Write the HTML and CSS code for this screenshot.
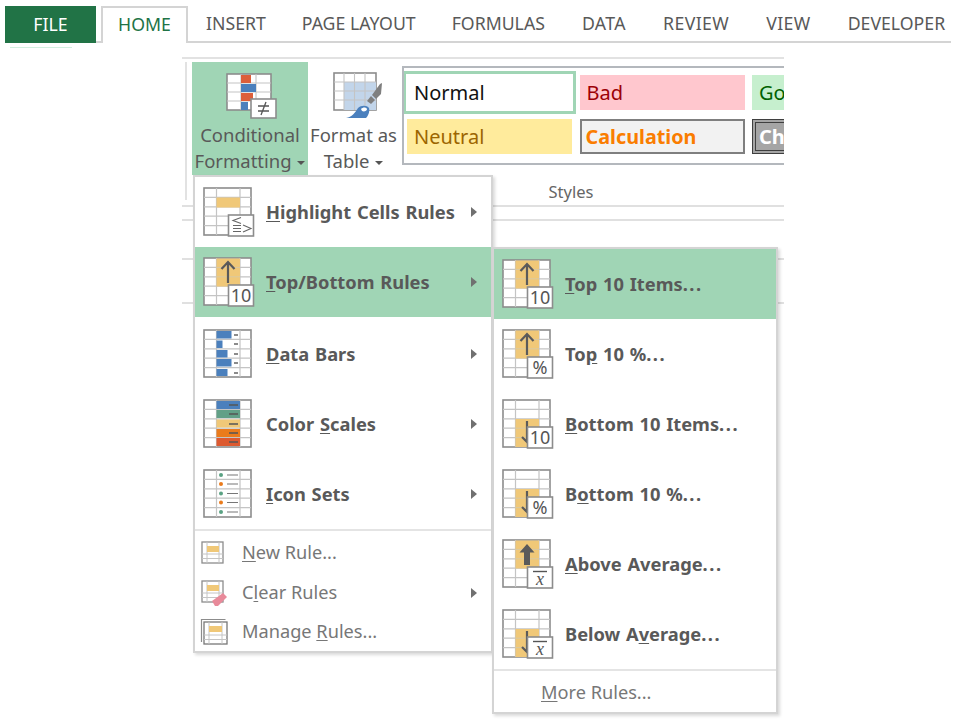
FILE: index.html
```html
<!DOCTYPE html>
<html lang="en">
<head>
<meta charset="utf-8">
<title>Conditional Formatting</title>
<link rel="stylesheet" href="styles.css">
</head>
<body>
<svg class="defs" width="0" height="0" aria-hidden="true">
  <defs>
    <symbol id="grid" viewBox="0 0 52 50">
      <rect x="1" y="1" width="47" height="47" fill="#fff" stroke="#8c8c8c" stroke-width="1.6"/>
      <path d="M13.5 1v47M37 1v47M1 10.4h47M1 19.8h47M1 29.2h47M1 38.6h47" stroke="#c4c4c4" stroke-width="1.2" fill="none"/>
    </symbol>
    <symbol id="badge10" viewBox="0 0 52 50">
      <rect x="25.5" y="28" width="25" height="21" fill="#fff" stroke="#8c8c8c" stroke-width="1.6"/>
      <text x="38" y="45" class="ic-t" text-anchor="middle">10</text>
    </symbol>
    <symbol id="badgepct" viewBox="0 0 52 50">
      <rect x="25.5" y="28" width="25" height="21" fill="#fff" stroke="#8c8c8c" stroke-width="1.6"/>
      <text x="38" y="45" class="ic-t" text-anchor="middle">%</text>
    </symbol>
    <symbol id="badgex" viewBox="0 0 52 50">
      <rect x="25.5" y="28" width="25" height="21" fill="#fff" stroke="#8c8c8c" stroke-width="1.6"/>
      <path d="M31 32.5h14" stroke="#555" stroke-width="1.4"/>
      <text x="38" y="46" class="ic-x" text-anchor="middle">x</text>
    </symbol>
    <symbol id="up" viewBox="0 0 52 50">
      <rect x="13.5" y="1.5" width="23.5" height="28" fill="#f0c878"/>
      <path d="M13.5 10.4h23.5M13.5 19.8h23.5" stroke="#d9c9a0" stroke-width="1"/>
      <path d="M25 26V5M18.5 12 25 5l6.5 7" fill="none" stroke="#5a5a5a" stroke-width="2.2"/>
    </symbol>
    <symbol id="upbold" viewBox="0 0 52 50">
      <rect x="13.5" y="1.5" width="23.5" height="28" fill="#f0c878"/>
      <path d="M13.5 10.4h23.5M13.5 19.8h23.5" stroke="#d9c9a0" stroke-width="1"/>
      <path d="M25 5l7.5 8.5H28V26h-6V13.500h-4.500z" fill="#5a5a5a"/>
    </symbol>
    <symbol id="down" viewBox="0 0 52 50">
      <rect x="13.5" y="20" width="23.5" height="28" fill="#f0c878"/>
      <path d="M13.5 29.2h23.5M13.5 38.6h23.5" stroke="#d9c9a0" stroke-width="1"/>
      <path d="M25 22v21M20 38l5 5 3-3" fill="none" stroke="#5a5a5a" stroke-width="2.2"/>
    </symbol>
  </defs>
</svg>

<nav class="tabs">
  <span class="tab file">FILE</span>
  <span class="tab home">HOME</span>
  <span class="tab">INSERT</span>
  <span class="tab">PAGE LAYOUT</span>
  <span class="tab">FORMULAS</span>
  <span class="tab wide-tab">DATA</span>
  <span class="tab wide-tab">REVIEW</span>
  <span class="tab wide-tab">VIEW</span>
  <span class="tab">DEVELOPER</span>
</nav>
<div class="file-accent"></div>

<section class="ribbon">
  <div class="ribbon-main">
    <div class="vline"></div>
    <div class="rbtn active">
      <svg class="rbtn-icon cf-icon" width="52" height="50" viewBox="0 0 52 50">
        <rect x="1" y="1" width="44" height="36" fill="#fff" stroke="#8c8c8c" stroke-width="1.6"/>
        <path d="M15 1v36M30 1v36M1 10h44M1 19h44M1 28h44" stroke="#c4c4c4" stroke-width="1.1"/>
        <rect x="15" y="2" width="10" height="8" fill="#dd5f3a"/>
        <rect x="15" y="11" width="15" height="8" fill="#4b80bd"/>
        <rect x="15" y="20" width="12" height="8" fill="#dd5f3a"/>
        <rect x="15" y="29" width="7" height="8" fill="#4b80bd"/>
        <rect x="25" y="26" width="25" height="19" fill="#fff" stroke="#8c8c8c" stroke-width="1.6"/>
        <path d="M32 33h11M32 38h11M40 29l-5 13" stroke="#555" stroke-width="1.3" fill="none"/>
      </svg>
      <span class="rbtn-label">Conditional<br>Formatting <i class="caret"></i></span>
    </div>
    <div class="rbtn fmt">
      <svg class="rbtn-icon fmt-icon" width="52" height="50" viewBox="0 0 52 50">
        <rect x="1" y="1" width="42" height="37" fill="#fff" stroke="#8c8c8c" stroke-width="1.6"/>
        <rect x="11" y="10" width="32" height="28" fill="#c2d5ea"/>
        <path d="M11 1v37M21.500 1v37M32 1v37M1 10h42M1 19h42M1 28h42" stroke="#c4c4c4" stroke-width="1.1"/>
        <path d="M39 23 47 12l2-1-1 11-5 5z" fill="#7f7f7f"/>
        <path d="M34 29l4-5 4 4-4 4z" fill="#7f7f7f"/>
        <path d="M13 46c6-1 9-5 12-10 3-3 9-3 11 0 1 4-1 8-3 10z" fill="#4b80bd"/>
        <path d="M28 37c2-2 5-2 6 0 0 2-3 3-5 2z" fill="#fff"/>
      </svg>
      <span class="rbtn-label">Format as<br>Table <i class="caret"></i></span>
    </div>
    <div class="styles">
      <div class="gallery">
        <div class="cell normal">Normal</div>
        <div class="cell bad">Bad</div>
        <div class="cell good">Good</div>
        <div class="cell neutral">Neutral</div>
        <div class="cell calc">Calculation</div>
        <div class="cell check">Check Cell</div>
      </div>
      <div class="group-label">Styles</div>
    </div>
  </div>
  <div class="rule r1"></div>
  <div class="rule r2"></div>
  <div class="rule r3"></div>
  <div class="rule r4"></div>
</section>

<div class="menu main-menu">
  <div class="mi">
    <svg class="ico" width="52" height="50"><use href="#grid"/><rect x="13.500" y="10.500" width="23.500" height="10" fill="#f0c878"/><rect x="25.500" y="28" width="25" height="21" fill="#fff" stroke="#8c8c8c" stroke-width="1.6"/><path d="M38 30.500l-8 3 8 3M30 38.500h8M30 41.500h8M30 44.500h8M40 38l8 3.500-8 3.500" fill="none" stroke="#666" stroke-width="1.1"/></svg>
    <span class="lbl"><u>H</u>ighlight Cells Rules</span><i class="arrow"></i>
  </div>
  <div class="mi sel">
    <svg class="ico" width="52" height="50"><use href="#grid"/><use href="#up"/><use href="#badge10"/></svg>
    <span class="lbl"><u>T</u>op/Bottom Rules</span><i class="arrow"></i>
  </div>
  <div class="mi after-sel">
    <svg class="ico" width="52" height="50"><use href="#grid"/>
      <path d="M13.500 2h15v7.500h-15zM13.500 11.500h6v7.500h-6zM13.500 21h11v7.500h-11zM13.500 30h15v7.500h-15zM13.500 40h11v7h-11z" fill="#4b80bd"/>
      <path d="M31 6h4M31 15h4M31 25h4M31 34h4M31 44h4" stroke="#666" stroke-width="1.400"/></svg>
    <span class="lbl"><u>D</u>ata Bars</span><i class="arrow"></i>
  </div>
  <div class="mi">
    <svg class="ico" width="52" height="50"><use href="#grid"/>
      <rect x="13.500" y="2" width="23.500" height="8" fill="#4b80bd"/><rect x="13.500" y="11" width="23.500" height="8" fill="#62a087"/><rect x="13.500" y="20.500" width="23.500" height="8" fill="#f0c878"/><rect x="13.500" y="30" width="23.500" height="8" fill="#ea7b1c"/><rect x="13.500" y="39" width="23.500" height="8" fill="#dd5a30"/>
      <path d="M26 6h9M26 15h9M26 25h9M26 34h9M26 43h9" stroke="#555" stroke-width="1.400"/></svg>
    <span class="lbl">Color <u>S</u>cales</span><i class="arrow"></i>
  </div>
  <div class="mi">
    <svg class="ico" width="52" height="50"><use href="#grid"/>
      <circle cx="18" cy="6" r="2" fill="#5aa283"/><circle cx="18" cy="15" r="2" fill="#ea7b1c"/><circle cx="18" cy="24.500" r="2" fill="#5aa283"/><circle cx="18" cy="33.500" r="2" fill="#ea7b1c"/><circle cx="18" cy="43" r="2" fill="#5aa283"/>
      <path d="M24 6h11M24 15h11M24 24.500h11M24 33.500h11M24 43h11" stroke="#777" stroke-width="1.200"/></svg>
    <span class="lbl"><u>I</u>con Sets</span><i class="arrow"></i>
  </div>
  <div class="sep main-sep"></div>
  <div class="mi small">
    <svg class="ico-s" width="28" height="28" viewBox="0 0 28 28"><rect x="2" y="3" width="21" height="21" fill="#fff" stroke="#8c8c8c" stroke-width="1.300"/><path d="M7 3v21M19 3v21M2 15h21M2 19.500h21" stroke="#c4c4c4"/><rect x="7" y="7" width="12" height="6" fill="#f0c878"/></svg>
    <span class="lbl-s"><u>N</u>ew Rule...</span>
  </div>
  <div class="mi small">
    <svg class="ico-s" width="28" height="28" viewBox="0 0 28 28"><rect x="2" y="2" width="21" height="21" fill="#fff" stroke="#8c8c8c" stroke-width="1.300"/><path d="M7 2v21M19 2v21M2 14h21M2 18.500h21" stroke="#c4c4c4"/><rect x="7" y="6" width="12" height="6" fill="#f0c878"/><path d="M12 22l11-8 4 4-9 9h-3z" fill="#e88a9a"/></svg>
    <span class="lbl-s">C<u>l</u>ear Rules</span><i class="arrow"></i>
  </div>
  <div class="mi small">
    <svg class="ico-s" width="28" height="28" viewBox="0 0 28 28"><path d="M1.500 24V1.500h24" fill="none" stroke="#8c8c8c" stroke-width="1.200"/><rect x="4" y="4" width="23" height="22" fill="#fff" stroke="#777" stroke-width="1.300"/><path d="M9 4v22M22 4v22M4 17h23M4 21.500h23" stroke="#c4c4c4"/><rect x="9" y="8" width="13" height="6" fill="#f0c878"/></svg>
    <span class="lbl-s">Manage <u>R</u>ules...</span>
  </div>
</div>

<div class="menu sub-menu">
  <div class="mi sel">
    <svg class="ico" width="52" height="50"><use href="#grid"/><use href="#up"/><use href="#badge10"/></svg>
    <span class="lbl"><u>T</u>op 10 Items<span class="dots">...</span></span>
  </div>
  <div class="mi">
    <svg class="ico" width="52" height="50"><use href="#grid"/><use href="#up"/><use href="#badgepct"/></svg>
    <span class="lbl">To<u>p</u> 10 %<span class="dots">...</span></span>
  </div>
  <div class="mi">
    <svg class="ico" width="52" height="50"><use href="#grid"/><use href="#down"/><use href="#badge10"/></svg>
    <span class="lbl"><u>B</u>ottom 10 Items<span class="dots">...</span></span>
  </div>
  <div class="mi">
    <svg class="ico" width="52" height="50"><use href="#grid"/><use href="#down"/><use href="#badgepct"/></svg>
    <span class="lbl">B<u>o</u>ttom 10 %<span class="dots">...</span></span>
  </div>
  <div class="mi">
    <svg class="ico" width="52" height="50"><use href="#grid"/><use href="#upbold"/><use href="#badgex"/></svg>
    <span class="lbl"><u>A</u>bove Average<span class="dots">...</span></span>
  </div>
  <div class="mi">
    <svg class="ico" width="52" height="50"><use href="#grid"/><use href="#down"/><use href="#badgex"/></svg>
    <span class="lbl">Below A<u>v</u>erage<span class="dots">...</span></span>
  </div>
  <div class="sep"></div>
  <div class="more"><u>M</u>ore Rules...</div>
</div>
</body>
</html>
```

FILE: styles.css
```css
* { box-sizing: border-box; }
html, body { margin: 0; padding: 0; background: #fff; }
body {
  width: 954px;
  height: 720px;
  position: relative;
  overflow: hidden;
  font-family: "Noto Sans", "Open Sans", sans-serif;
  color: #595959;
}
.defs { position: absolute; }
.ic-t { font: 18px "Noto Sans", sans-serif; fill: #555; }
.ic-x { font: italic 18px "Liberation Serif", serif; fill: #555; }

.tabs {
  display: flex;
  align-items: flex-start;
  width: 946px;
  height: 37px;
  margin: 6px 0 0 5px;
  border-bottom: 2px solid #d4d4d4;
  font-size: 17.700px;
}
.tab {
  display: flex;
  flex: none;
  align-items: center;
  padding: 0 18px 3px;
  height: 37px;
  white-space: nowrap;
}
.tab:last-child { padding-right: 0; margin-left: 1px; }
.tab.wide-tab { letter-spacing: .4px; padding-left: 19px; padding-right: 18px; }
.tab.file {
  width: 91px;
  justify-content: center;
  background: #217346;
  color: #fff;
  padding: 0 0 1px;
  margin-right: 5px;
}
.tab.home {
  width: 87px;
  justify-content: center;
  padding: 0 0 3px;
  color: #217346;
  background: #fff;
  border: 2px solid #d4d4d4;
  border-bottom: 0;
}
.file-accent {
  width: 62px;
  height: 1px;
  margin-left: 10px;
  margin-top: 4px;
  background: #d3efe0;
}

.ribbon {
  width: 602px;
  margin: 9px 0 0 182px;
  border-top: 2px solid #e2e2e2;
  overflow: hidden;
}
.ribbon-main {
  display: flex;
  height: 146px;
  padding: 3px 0 0 3px;
}
.vline {
  flex: none;
  width: 2px;
  height: 138px;
  margin-right: 5px;
  background: #e2e2e2;
}
.rbtn {
  width: 116px;
  height: 113px;
  display: flex;
  flex-direction: column;
  align-items: center;
  flex: none;
  font-size: 18.500px;
  line-height: 26px;
  text-align: center;
  padding-top: 10px;
}
.rbtn.active { background: #a0d5b5; }
.rbtn.fmt { width: 89px; margin-left: 1px; }
.rbtn-icon { display: block; flex: none; }
.cf-icon { margin-left: 3px; margin-top: 1px; margin-bottom: -1px; }
.fmt-icon { margin-left: 10px; }
.rbtn-label { display: block; white-space: nowrap; }
.caret {
  display: inline-block;
  width: 0;
  height: 0;
  border: 4px solid transparent;
  border-top-color: #555;
  border-bottom: 0;
  vertical-align: middle;
  margin-left: 1px;
}
.styles { flex: none; margin-left: 4px; width: 382px; margin-top: 4px; }
.gallery {
  display: grid;
  grid-template-columns: 165px 165px 165px;
  grid-template-rows: 35px 35px;
  gap: 9px 7.500px;
  height: 99px;
  padding: 7px 0 0 3px;
  border: solid #b4b8bd;
  border-width: 2px 0 2px 2px;
  overflow: hidden;
  font-size: 20px;
}
.cell {
  display: flex;
  align-items: center;
  padding-left: 7px;
  white-space: nowrap;
  overflow: hidden;
}
.normal {
  color: #111;
  background: #fff;
  outline: 3px solid #a0d5b5;
  outline-offset: 1px;
}
.bad { background: #ffc7ce; color: #9c0006; }
.good { background: #c6efce; color: #006100; }
.neutral { background: #ffeb9c; color: #9c6500; }
.calc { background: #f2f2f2; color: #fa7d00; font-weight: 700; border: 2px solid #7f7f7f; padding-left: 4px; font-size: 19.800px; }
.check { background: #a5a5a5; color: #fff; font-weight: 700; border: 4px double #3f3f3f; padding-left: 3px; }
.group-label {
  text-align: center;
  font-size: 16.500px;
  line-height: 20px;
  margin-top: 17px;
  color: #666;
  padding-right: 44px;
}
.rule { height: 2px; background: #e0e0e0; }
.r2 { margin-top: 12px; }
.r3 { margin-top: 37px; }
.r4 { margin-top: 42px; }

.menu {
  position: absolute;
  background: #fff;
  border: 2px solid #d4d4d4;
  box-shadow: 2px 2px 3px rgba(0, 0, 0, .15);
  z-index: 2;
}
.main-menu { left: 193px; top: 175px; width: 300px; height: 478px; }
.sub-menu { left: 492px; top: 247px; width: 286px; height: 467px; z-index: 3; }

.mi {
  height: 70px;
  display: flex;
  align-items: center;
  position: relative;
  padding-left: 8px;
}
.mi.sel { background: #a0d5b5; }
.mi.after-sel { margin-top: 2px; }
.ico { flex: none; margin-right: 11px; display: block; }
.lbl {
  font-size: 18.300px;
  font-weight: 700;
  word-spacing: 1px;
  color: #595959;
  white-space: nowrap;
  margin-bottom: 2px;
}
.dots { letter-spacing: 1.500px; }
.arrow {
  position: absolute;
  right: 14px;
  top: 50%;
  margin-top: -5px;
  width: 0;
  height: 0;
  border: 5px solid transparent;
  border-left: 6px solid #707070;
  border-right: 0;
}
.sep { height: 2px; background: #e4e4e4; }
.main-sep { margin-bottom: 2.500px; }
.small { height: 39.500px; padding-left: 5px; }
.ico-s { flex: none; display: block; margin-right: 14px; }
.lbl-s { font-size: 18.200px; color: #777; white-space: nowrap; margin-bottom: 2px; }
.more { font-size: 18.200px; color: #777; padding: 7px 0 0 47px; line-height: 28px; }
u { text-underline-offset: 2px; }
```
